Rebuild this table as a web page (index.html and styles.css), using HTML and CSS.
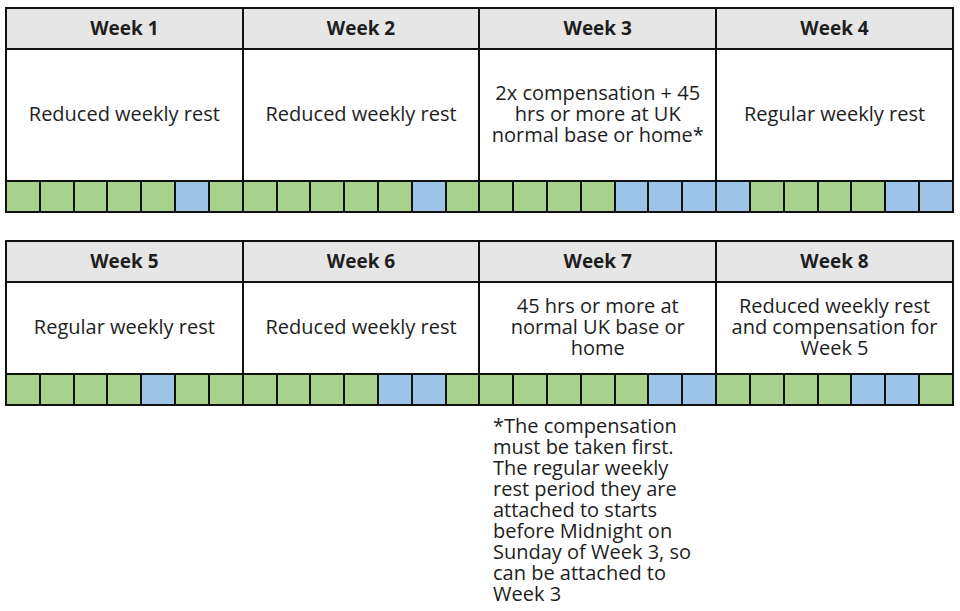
FILE: index.html
```html
<!DOCTYPE html>
<html lang="en">
<head>
<meta charset="utf-8">
<title>Weekly rest schedule</title>
<link rel="stylesheet" href="styles.css">
</head>
<body>
<main class="page">
  <table class="sched sched-a">
    <colgroup>
      <col><col><col><col><col><col><col><col><col><col><col><col><col><col>
      <col><col><col><col><col><col><col><col><col><col><col><col><col><col>
    </colgroup>
    <tr class="hd">
      <th colspan="7">Week 1</th>
      <th colspan="7">Week 2</th>
      <th colspan="7">Week 3</th>
      <th colspan="7">Week 4</th>
    </tr>
    <tr class="bd">
      <td colspan="7">Reduced weekly rest</td>
      <td colspan="7">Reduced weekly rest</td>
      <td colspan="7">2x compensation + 45 hrs or more at UK normal base or home*</td>
      <td colspan="7">Regular weekly rest</td>
    </tr>
    <tr class="days">
      <td class="g"></td><td class="g"></td><td class="g"></td><td class="g"></td><td class="g"></td><td class="b"></td><td class="g"></td>
      <td class="g"></td><td class="g"></td><td class="g"></td><td class="g"></td><td class="g"></td><td class="b"></td><td class="g"></td>
      <td class="g"></td><td class="g"></td><td class="g"></td><td class="g"></td><td class="b"></td><td class="b"></td><td class="b"></td>
      <td class="b"></td><td class="g"></td><td class="g"></td><td class="g"></td><td class="g"></td><td class="b"></td><td class="b"></td>
    </tr>
  </table>

  <table class="sched sched-b">
    <colgroup>
      <col><col><col><col><col><col><col><col><col><col><col><col><col><col>
      <col><col><col><col><col><col><col><col><col><col><col><col><col><col>
    </colgroup>
    <tr class="hd">
      <th colspan="7">Week 5</th>
      <th colspan="7">Week 6</th>
      <th colspan="7">Week 7</th>
      <th colspan="7">Week 8</th>
    </tr>
    <tr class="bd">
      <td colspan="7">Regular weekly rest</td>
      <td colspan="7">Reduced weekly rest</td>
      <td colspan="7">45 hrs or more at normal UK base or home</td>
      <td colspan="7">Reduced weekly rest and compensation for Week 5</td>
    </tr>
    <tr class="days">
      <td class="g"></td><td class="g"></td><td class="g"></td><td class="g"></td><td class="b"></td><td class="g"></td><td class="g"></td>
      <td class="g"></td><td class="g"></td><td class="g"></td><td class="g"></td><td class="b"></td><td class="b"></td><td class="g"></td>
      <td class="g"></td><td class="g"></td><td class="g"></td><td class="g"></td><td class="g"></td><td class="b"></td><td class="b"></td>
      <td class="g"></td><td class="g"></td><td class="g"></td><td class="g"></td><td class="b"></td><td class="b"></td><td class="g"></td>
    </tr>
  </table>

  <div class="notes">
    <p class="footnote">*The compensation must be taken first. The regular weekly rest period they are attached to starts before Midnight on Sunday of Week 3, so can be attached to Week 3</p>
  </div>
</main>
</body>
</html>
```

FILE: styles.css
```css
html, body {
  margin: 0;
  padding: 0;
  background: #ffffff;
}

body {
  font-family: "Open Sans", Lato, "Liberation Sans", sans-serif;
  color: #1e1e1e;
}

.page {
  padding: 7px 0 0 5px;
}

.sched {
  width: 949px;
  table-layout: fixed;
  border-collapse: separate;
  border-spacing: 0;
  border-top: 2px solid #111;
  border-left: 2px solid #111;
}

.sched th,
.sched td {
  border-right: 2px solid #111;
  border-bottom: 2px solid #111;
  padding: 0;
  text-align: center;
  vertical-align: middle;
}

.sched-b {
  margin-top: 27px;
}

.hd th {
  height: 37px;
  padding-bottom: 2px;
  background: #e6e6e6;
  font-size: 19px;
  font-weight: 700;
}

.bd td {
  padding: 0 10px 4px;
  font-size: 20px;
  line-height: 21px;
  font-weight: 400;
}

.sched-a .bd td {
  height: 126px;
}

.sched-b .bd td {
  height: 86px;
}

.days td {
  height: 29px;
}

.days .g {
  background: #a9d18e;
}

.days .b {
  background: #9dc3e6;
}

.notes {
  display: grid;
  grid-template-columns: 488px 208px;
  padding-top: 9px;
}

.footnote {
  grid-column: 2;
  margin: 0;
  font-size: 20px;
  line-height: 21px;
}
```
